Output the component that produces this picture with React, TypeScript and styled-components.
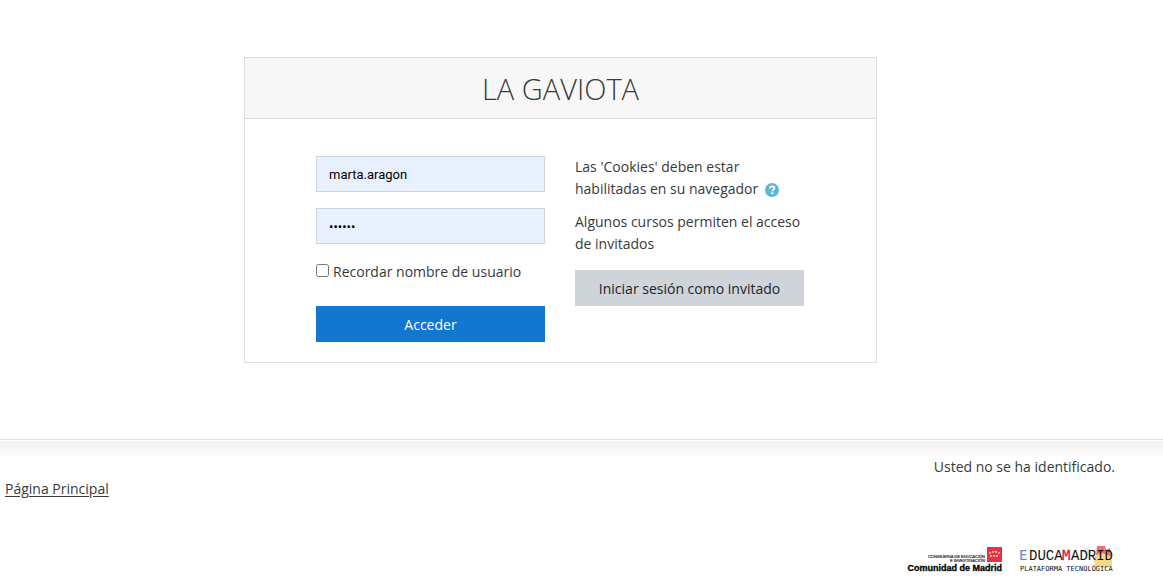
import React from "react";
import styled, { createGlobalStyle } from "styled-components";

const GlobalStyle = createGlobalStyle`
  *, *::before, *::after { box-sizing: border-box; }
  body {
    margin: 0;
    background: #fff;
    color: #373a3c;
    font-family: "Segoe UI", "Open Sans", "Noto Sans", sans-serif;
    font-size: 14px;
    line-height: 22px;
  }
`;

const Main = styled.main`
  display: flex;
  justify-content: center;
  padding: 57px 42px 76px 0;
`;

const Card = styled.section`
  width: 100%;
  max-width: 633px;
  border: 1px solid #dcdddd;
`;

const CardHeader = styled.h1`
  margin: 0;
  padding: 13px 20px 11px;
  background: #f7f7f7;
  border-bottom: 1px solid #d8d9d9;
  font-size: 29px;
  font-weight: 300;
  line-height: 36px;
  text-align: center;
`;

const CardBody = styled.div`
  display: grid;
  grid-template-columns: 1fr 1fr;
  gap: 30px;
  max-width: 489px;
  margin: 0 auto;
  padding: 37px 1px 20px 0;
`;

const LoginForm = styled.form`
  display: flex;
  flex-direction: column;
  gap: 16px;
`;

const TextField = styled.input`
  width: 100%;
  height: 36px;
  padding: 0 12px;
  border: 1px solid #ced4da;
  border-radius: 0;
  background: #e8f0fe;
  color: #000;
  font-family: Roboto, "Liberation Sans", sans-serif;
  font-size: 13px;
`;

const Remember = styled.label`
  display: flex;
  align-items: center;
  gap: 4px;
  padding: 1px 0 7px;
`;

const Checkbox = styled.input`
  width: 13px;
  height: 13px;
  margin: 0 0 3px;
`;

const Button = styled.button<{ $primary?: boolean }>`
  width: 100%;
  height: 36px;
  padding: 2px 0 0;
  border: 0;
  background: ${(p) => (p.$primary ? "#1177d1" : "#ced4da")};
  color: ${(p) => (p.$primary ? "#fff" : "#212529")};
  font: inherit;
`;

const Notes = styled.div`
  display: flex;
  flex-direction: column;
`;

const Note = styled.p<{ $last?: boolean }>`
  margin: 0 0 ${(p) => (p.$last ? 15 : 11)}px;
`;

const HelpButton = styled.button`
  display: inline-block;
  margin: 0 0 0 7px;
  padding: 0;
  border: 0;
  background: none;
  line-height: 0;
  vertical-align: -3px;
`;

const Footer = styled.footer`
  padding: 0 48px 12px 5px;
  border-top: 1px solid #dcdddd;
`;

const Shade = styled.div`
  height: 15px;
  margin: 1px -48px 0 -5px;
  background: linear-gradient(#f1f1f1, #fbfbfb);
`;

const Status = styled.p`
  margin: 0;
  text-align: right;
`;

const HomeLink = styled.a`
  color: #373a3c;
  text-decoration: underline;
  text-underline-offset: 2px;
`;

const Logos = styled.div`
  display: flex;
  justify-content: flex-end;
  gap: 15px;
  margin-top: 46px;
`;

const HelpIcon = () => (
  <svg width="14" height="14" viewBox="0 0 14 14" aria-hidden="true">
    <circle cx="7" cy="7" r="7" fill="#5bb6d9" />
    <path d="M4.7 5.3C4.9 3.9 5.8 3.3 7.1 3.3c1.3 0 2.3.7 2.3 1.8 0 1.5-2.1 1.6-2.1 3.2" fill="none" stroke="#fff" strokeWidth="1.8" />
    <rect x="6.3" y="9.3" width="2" height="1.9" fill="#fff" />
  </svg>
);

const star = "M0-1.3 .4-.4 1.3-.4 .6.2 .8 1.1 0 .6-.8 1.1-.6.2-1.3-.4-.4-.4Z";

const MadridLogo = () => (
  <svg width="98" height="28" viewBox="-4 0 98 28" role="img" aria-label="Comunidad de Madrid">
    <rect x="78" y="1" width="15" height="15" fill="#e5323e" />
    <g fill="#fff">
      {[[81, 7], [84, 6], [87, 6], [90, 7], [82, 10], [85, 10], [88, 10]].map(([x, y]) => (
        <path key={x} d={star} transform={`translate(${x} ${y})`} />
      ))}
    </g>
    <g fill="#333" stroke="#333" strokeWidth=".2" fontFamily="Liberation Sans, sans-serif" fontSize="4" textAnchor="end">
      <text x="76" y="12">CONSEJERÍA DE EDUCACIÓN</text>
      <text x="76" y="16">E INVESTIGACIÓN</text>
    </g>
    <text x="93" y="25" textAnchor="end" fill="#000" stroke="#000" strokeWidth=".3" fontFamily="Liberation Sans, sans-serif" fontWeight="700" fontSize="9">
      Comunidad de Madrid
    </text>
  </svg>
);

const EducaLogo = () => (
  <svg width="97" height="28" viewBox="0 0 97 28" role="img" aria-label="EducaMadrid Plataforma Tecnológica">
    <path d="M66 2 71 1 74 6 70 10 65 7Z" fill="#e9e9ee" />
    <path d="M79 0h8l1 4 4-2 2 8-7 3-9-4Z" fill="#e8756c" />
    <path d="M78 9 85 7 94 11v9l-5 2-11-1-2-7Z" fill="#f4d98a" />
    <g fontFamily="Liberation Mono, monospace" fontSize="14" fill="#111">
      <text x="1" y="14" fontFamily="DejaVu Sans Mono, monospace" fill="#6688c4">E</text>
      <text x="11" y="14">DUCA</text>
      <text x="44" y="14" fontFamily="DejaVu Sans Mono, monospace" fill="#d9233f" stroke="#d9233f" strokeWidth=".3">M</text>
      <text x="53" y="14">ADRID</text>
    </g>
    <text x="2" y="25" fontFamily="DejaVu Sans Mono, monospace" fontSize="7" fill="#111">
      PLATAFORMA TECNOLÓGICA
    </text>
  </svg>
);

export default function App() {
  return (
    <>
      <GlobalStyle />
      <Main>
        <Card>
          <CardHeader>LA GAVIOTA</CardHeader>
          <CardBody>
            <LoginForm onSubmit={(e) => e.preventDefault()}>
              <TextField type="text" aria-label="Nombre de usuario" defaultValue="marta.aragon" />
              <TextField type="password" aria-label="Contraseña" defaultValue="secret" />
              <Remember>
                <Checkbox type="checkbox" />
                Recordar nombre de usuario
              </Remember>
              <Button $primary type="submit">Acceder</Button>
            </LoginForm>
            <Notes>
              <Note>
                Las 'Cookies' deben estar habilitadas en su navegador
                <HelpButton type="button" aria-label="Ayuda">
                  <HelpIcon />
                </HelpButton>
              </Note>
              <Note $last>Algunos cursos permiten el acceso de invitados</Note>
              <Button type="button">Iniciar sesión como invitado</Button>
            </Notes>
          </CardBody>
        </Card>
      </Main>
      <Footer>
        <Shade />
        <Status>Usted no se ha identificado.</Status>
        <HomeLink href="#">Página Principal</HomeLink>
        <Logos>
          <MadridLogo />
          <EducaLogo />
        </Logos>
      </Footer>
    </>
  );
}
